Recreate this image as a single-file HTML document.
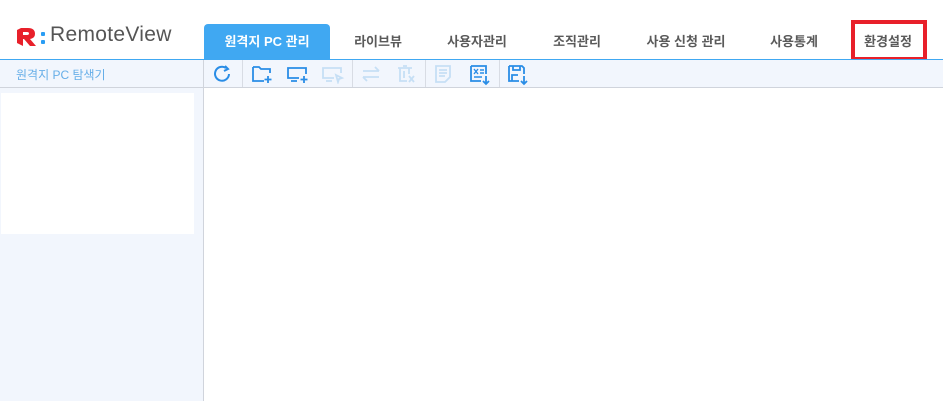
<!DOCTYPE html>
<html><head><meta charset="utf-8"><style>
*{margin:0;padding:0;box-sizing:border-box}
body{width:943px;height:401px;background:#fff;position:relative;overflow:hidden;font-family:"Liberation Sans","Noto Sans CJK KR",sans-serif}
.abs{position:absolute}
.tab{position:absolute;top:24px;height:35px;line-height:35px;font-size:13px;font-weight:bold;color:#5a5a5a;text-align:center;transform:translateX(-50%);white-space:nowrap}
.ic{position:absolute;top:64px}
</style></head><body>
<!-- logo -->
<svg class="abs" style="left:15px;top:26px" width="34" height="22" viewBox="0 0 34 22">
<path d="M2 4 L6 2 L13 2 Q20 2 20 8 Q20 12 15 13 L21 20 L15 20 L9 13 L8 13 L8 20 L2 17 Z M8 6 L8 9 L12 9 Q14 9 14 7.5 Q14 6 12 6 Z" fill="#e8202a" fill-rule="evenodd"/>
<rect x="26" y="6" width="4" height="4" rx="1" fill="#2a9df4"/>
<rect x="26" y="14" width="4" height="4" rx="1" fill="#2a9df4"/>
</svg>
<div class="abs" style="left:50px;top:23px;font-size:21px;color:#555;letter-spacing:0.3px">RemoteView</div>
<!-- tabs -->
<div class="abs" style="left:204px;top:24px;width:126px;height:36px;background:#40a8f2;border-radius:4px 4px 0 0"></div>
<div class="tab" style="left:267px;color:#fff">원격지 PC 관리</div>
<div class="tab" style="left:378px">라이브뷰</div>
<div class="tab" style="left:477px">사용자관리</div>
<div class="tab" style="left:577px">조직관리</div>
<div class="tab" style="left:686px">사용 신청 관리</div>
<div class="tab" style="left:794px">사용통계</div>
<div class="tab" style="left:888px">환경설정</div>
<div class="abs" style="left:851px;top:20px;width:76px;height:41px;border:4px solid #e8202a"></div>
<!-- bars -->
<div class="abs" style="left:0;top:59px;width:943px;height:1px;background:#40a8f2"></div>
<div class="abs" style="left:0;top:60px;width:943px;height:27px;background:#f2f6fd"></div>
<div class="abs" style="left:0;top:87px;width:943px;height:1px;background:#d0d4dc"></div>
<div class="abs" style="left:0;top:88px;width:203px;height:313px;background:#f2f6fd"></div>
<div class="abs" style="left:1px;top:93px;width:193px;height:141px;background:#fff"></div>
<div class="abs" style="left:203px;top:60px;width:1px;height:341px;background:#d0d4dc"></div>
<div class="abs" style="left:16px;top:66px;font-size:12px;color:#66aee8">원격지 PC 탐색기</div>
<!-- separators -->
<div class="abs" style="left:242px;top:60px;width:1px;height:27px;background:#d8dce4"></div>
<div class="abs" style="left:352px;top:60px;width:1px;height:27px;background:#d8dce4"></div>
<div class="abs" style="left:425px;top:60px;width:1px;height:27px;background:#d8dce4"></div>
<div class="abs" style="left:499px;top:60px;width:1px;height:27px;background:#d8dce4"></div>
<!-- icons -->
<svg class="ic" style="left:212px" width="22" height="20" viewBox="0 0 22 20" fill="none" stroke="#2a8de6" stroke-width="2"><path d="M17 10 A7 7 0 1 1 14 4"/><path d="M13 2 L16 5 L12 7" /></svg>
<svg class="ic" style="left:251px" width="24" height="20" viewBox="0 0 24 20" fill="none" stroke="#2a8de6" stroke-width="1.8"><path d="M2 3 H8 L10 5 H19 V9 M2 3 V17 H13"/><path d="M17 12 V19 M13.5 15.5 H20.5"/></svg>
<svg class="ic" style="left:286px" width="24" height="20" viewBox="0 0 24 20" fill="none" stroke="#2a8de6" stroke-width="1.8"><path d="M13 14 H2 V4 H20 V10 M5 17 H11"/><path d="M18 12 V19 M14.5 15.5 H21.5"/></svg>
<svg class="ic" style="left:321px" width="24" height="20" viewBox="0 0 24 20" fill="none" stroke="#c6dff5" stroke-width="1.8"><path d="M13 14 H2 V4 H20 V9 M5 17 H11"/><path d="M15 11 L21 14 L18 15 L17 18 Z"/></svg>
<svg class="ic" style="left:360px" width="22" height="20" viewBox="0 0 22 20" fill="none" stroke="#c6dff5" stroke-width="1.8"><path d="M3 7 H19 M15 3 L19 7 M19 13 H3 M7 17 L3 13"/></svg>
<svg class="ic" style="left:395px" width="22" height="20" viewBox="0 0 22 20" fill="none" stroke="#c6dff5" stroke-width="1.8"><path d="M3 4 H17 M8 2 H12 M5 4 V17 H12 M9 7 V14 M14 4 V10 M14 12 L19 18 M19 12 L14 18"/></svg>
<svg class="ic" style="left:433px" width="20" height="20" viewBox="0 0 20 20" fill="none" stroke="#c6dff5" stroke-width="1.8"><path d="M3 2 H17 V13 L12 18 H3 Z M6 6 H14 M6 9 H14 M6 12 H12"/></svg>
<svg class="ic" style="left:469px" width="22" height="22" viewBox="0 0 22 22" fill="none" stroke="#2a8de6" stroke-width="1.8"><path d="M2 2 H17 V10 M2 2 V17 H12"/><path d="M5 5 L9 10 M9 5 L5 10 M11 6 H15 M11 9 H15 M5 13 H13" stroke-width="1.4"/><path d="M17 12 V20 M14 17 L17 20 L20 17"/></svg>
<svg class="ic" style="left:507px" width="22" height="22" viewBox="0 0 22 22" fill="none" stroke="#2a8de6" stroke-width="1.8"><path d="M2 2 H15 L17 4 V10 M2 2 V17 H12 M6 2 V6 H13 V2 M5 17 V11 H11"/><path d="M17 12 V20 M14 17 L17 20 L20 17"/></svg>
</body></html>
